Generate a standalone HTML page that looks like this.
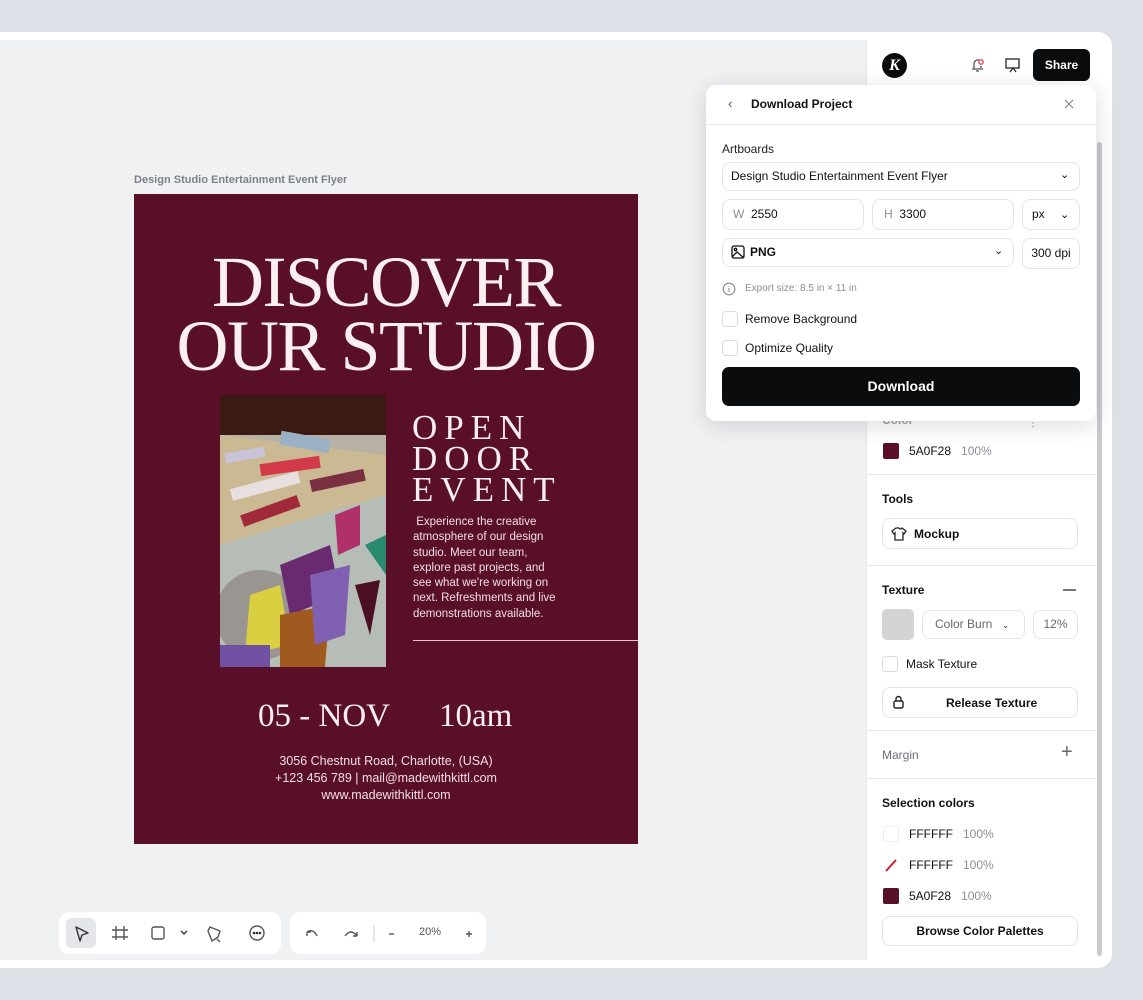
<!DOCTYPE html>
<html><head><meta charset="utf-8"><style>
*{box-sizing:border-box;margin:0;padding:0}
body{width:1143px;height:1000px;background:#dde1e7;font-family:"Liberation Sans",sans-serif;position:relative;overflow:hidden;color:#111}
.abs{position:absolute}
.card{left:-20px;top:32px;width:1132px;height:936px;background:#fff;border-radius:14px}
.canvas{left:0;top:40px;width:866px;height:920px;background:#f0f1f3}
.panel{left:866px;top:40px;width:238px;height:920px;background:#fff;border-left:1px solid #e6e7ea}
.flyer{left:134px;top:194px;width:504px;height:650px;background:#5a0f28}
.serif{font-family:"Liberation Serif",serif;color:#fff;font-weight:normal}
.sans{font-family:"Liberation Sans",sans-serif}
.box{border:1px solid #e3e5e8;border-radius:8px;background:#fff}
.lbl{font-size:12px;font-weight:bold;color:#111}
.sep{position:absolute;left:866px;width:230px;height:1px;background:#e6e7ea}
.sw{width:16px;height:16px;border-radius:2px}
.row{display:flex;align-items:center;font-size:12px;gap:10px}
.grey{color:#8a8f98}
.chk{width:16px;height:16px;border:1px solid #d9dbdf;border-radius:4px;background:#fff}
</style></head><body>
<div class="abs card"></div>
<div class="abs canvas"></div>

<div class="abs sans" style="left:134px;top:174px;font-size:11px;font-weight:bold;color:#7b818b">Design Studio Entertainment Event Flyer</div>
<div class="abs flyer">
  <div class="abs serif" style="left:0;width:504px;text-align:center;top:56px;font-size:72px;line-height:64px;letter-spacing:-1.5px;color:#fbeff2">DISCOVER<br>OUR STUDIO</div>
  <svg class="abs" style="left:86px;top:201px" width="166" height="272" viewBox="0 0 166 272">
    <rect width="166" height="272" fill="#b8b2a4"/>
    <rect width="166" height="40" fill="#3a1a12"/>
    <polygon points="0,40 166,60 166,120 0,150" fill="#cbb994"/>
    <polygon points="0,150 166,100 166,272 0,272" fill="#b6bcb6"/>
    <rect x="5" y="55" width="40" height="10" fill="#c9c4d8" transform="rotate(-10 25 60)"/>
    <rect x="40" y="65" width="60" height="12" fill="#d23a4a" transform="rotate(-8 70 70)"/>
    <rect x="10" y="85" width="70" height="12" fill="#e8e0e0" transform="rotate(-15 45 90)"/>
    <rect x="60" y="40" width="50" height="14" fill="#9bb0c4" transform="rotate(10 85 47)"/>
    <rect x="90" y="80" width="55" height="12" fill="#7a3040" transform="rotate(-12 115 85)"/>
    <rect x="20" y="110" width="60" height="12" fill="#a02a3a" transform="rotate(-20 50 115)"/>
    <circle cx="40" cy="220" r="45" fill="#9a9590"/>
    <polygon points="60,170 110,150 120,200 70,220" fill="#6a2a70"/>
    <polygon points="30,200 60,190 70,250 25,260" fill="#d8d040"/>
    <polygon points="60,220 110,210 105,272 60,272" fill="#a05a20"/>
    <polygon points="90,180 130,170 125,240 95,250" fill="#8060b0"/>
    <polygon points="135,190 160,185 150,240" fill="#4a0f22"/>
    <polygon points="145,150 166,140 166,180" fill="#2a8a70"/>
    <polygon points="115,120 140,110 140,150 118,160" fill="#b0306a"/>
    <rect x="0" y="250" width="50" height="22" fill="#7050a0"/>
  </svg>
  <div class="abs serif" style="left:278px;top:218px;font-size:35px;line-height:31px;letter-spacing:7px;color:#fbeff2">OPEN<br>DOOR<br>EVENT</div>
  <div class="abs sans" style="left:279px;top:321px;font-size:11.5px;line-height:15.3px;color:#f1dfe4">&nbsp;Experience the creative<br>atmosphere of our design<br>studio. Meet our team,<br>explore past projects, and<br>see what we're working on<br>next. Refreshments and live<br>demonstrations available.</div>
  <div class="abs" style="left:279px;top:446px;width:225px;height:1px;background:#e8c8d0"></div>
  <div class="abs serif" style="left:124px;top:504px;font-size:33px;letter-spacing:0px;color:#fbeff2">05 - NOV</div>
  <div class="abs serif" style="left:305px;top:504px;font-size:33px;color:#fbeff2">10am</div>
  <div class="abs sans" style="left:0;width:504px;text-align:center;top:559px;font-size:12.5px;line-height:17px;color:#f1dfe4">3056 Chestnut Road, Charlotte, (USA)<br>+123 456 789 | mail@madewithkittl.com<br>www.madewithkittl.com</div>
</div>

<!-- toolbar -->
<div class="abs" style="left:59px;top:912px;width:222px;height:42px;background:#fff;border-radius:10px"></div>
<div class="abs" style="left:66px;top:918px;width:30px;height:30px;background:#e4e6ea;border-radius:6px"></div>
<svg class="abs" style="left:59px;top:912px" width="222" height="42" fill="none" stroke="#333" stroke-width="1.4" stroke-linejoin="round">
  <path d="M17 15 L29 21 L23 23 L21 29 Z"/>
  <path d="M57 14v14M65 14v14M53 18h16M53 25h16" stroke="#555"/>
  <rect x="93" y="15" width="12" height="12" rx="2" stroke="#555"/>
  <path d="M122 19l3 3 3-3" stroke="#333"/>
  <path d="M151 15l10 4-2 6-6 4-4-10z M158 27l3 3" stroke="#555"/>
  <circle cx="198" cy="21" r="7" stroke="#555"/><circle cx="195" cy="21" r=".6" fill="#555"/><circle cx="198" cy="21" r=".6" fill="#555"/><circle cx="201" cy="21" r=".6" fill="#555"/>
</svg>
<div class="abs" style="left:290px;top:912px;width:196px;height:42px;background:#fff;border-radius:10px"></div>
<svg class="abs" style="left:290px;top:912px" width="196" height="42" fill="none" stroke="#555" stroke-width="1.4">
  <path d="M17 20 q6-4 10 4 M17 20 l0 4 M17 20 l4 0"/>
  <path d="M67 24 q-6-8-12 0 M67 24 l0-4 M67 24 l-4 0"/>
  <path d="M84 13v17" stroke="#ddd"/>
  <path d="M99 22h5"/>
  <path d="M176 22h6M179 19v6"/>
</svg>
<div class="abs" style="left:419px;top:926px;font-size:11px;color:#555">20%</div>

<!-- panel -->
<div class="abs panel"></div>
<div class="abs" style="left:882px;top:53px;width:25px;height:25px;border-radius:50%;background:#0b0b0b;color:#fff;font:italic bold 16px 'Liberation Serif',serif;text-align:center;line-height:25px">K</div>
<svg class="abs" style="left:968px;top:55px" width="20" height="20" fill="none" stroke="#555" stroke-width="1.3"><path d="M4 14h11M6 14V9a4 4 0 0 1 5-4M13 13V11M8 16h3"/><circle cx="13" cy="7" r="2.2" stroke="#e0424a"/></svg>
<svg class="abs" style="left:1003px;top:55px" width="20" height="20" fill="none" stroke="#333" stroke-width="1.4"><rect x="3" y="4" width="13" height="9"/><path d="M7 17l3-4 3 4"/></svg>
<div class="abs" style="left:1033px;top:49px;width:57px;height:32px;background:#0b0c0e;border-radius:6px;color:#fff;font-size:12px;font-weight:bold;text-align:center;line-height:32px">Share</div>

<div class="abs lbl" style="left:882px;top:413px;color:#444;opacity:.5">Color</div>
<div class="abs" style="left:1028px;top:418px;font-size:10px;color:#777">⋮</div>
<div class="abs row" style="left:883px;top:443px"><div class="sw" style="background:#5a0f28"></div><span>5A0F28</span><span class="grey">100%</span></div>
<div class="sep" style="top:474px"></div>
<div class="abs lbl" style="left:882px;top:492px">Tools</div>
<div class="abs box" style="left:882px;top:518px;width:196px;height:31px"></div>
<svg class="abs" style="left:891px;top:526px" width="16" height="16" fill="none" stroke="#222" stroke-width="1.3"><path d="M5 2L1 5l2 3 1-1v7h8V7l1 1 2-3-4-3q-2 2-3 0z"/></svg>
<div class="abs lbl" style="left:914px;top:527px">Mockup</div>
<div class="sep" style="top:565px"></div>
<div class="abs lbl" style="left:882px;top:583px">Texture</div>
<div class="abs" style="left:1063px;top:589px;width:13px;height:1.5px;background:#777"></div>
<div class="abs" style="left:882px;top:609px;width:32px;height:31px;border-radius:5px;background:#d4d4d4"></div>
<div class="abs box" style="left:922px;top:610px;width:103px;height:29px;font-size:12px;color:#666;line-height:27px;padding-left:12px">Color Burn <span style="font-size:9px;color:#333;margin-left:6px">⌄</span></div>
<div class="abs box" style="left:1033px;top:610px;width:45px;height:29px;font-size:12px;color:#666;line-height:27px;text-align:center">12%</div>
<div class="abs chk" style="left:882px;top:656px"></div>
<div class="abs" style="left:906px;top:657px;font-size:12px">Mask Texture</div>
<div class="abs box" style="left:882px;top:687px;width:196px;height:31px"></div>
<svg class="abs" style="left:892px;top:695px" width="14" height="14" fill="none" stroke="#222" stroke-width="1.4"><rect x="2" y="6" width="9" height="7" rx="1.5"/><path d="M4 6V4a2.5 2.5 0 0 1 5 0v2"/></svg>
<div class="abs lbl" style="left:946px;top:696px">Release Texture</div>
<div class="sep" style="top:730px"></div>
<div class="abs" style="left:882px;top:748px;font-size:12px;color:#6c717a">Margin</div>
<div class="abs" style="left:1061px;top:741px;font-size:20px;color:#666;font-weight:300">+</div>
<div class="sep" style="top:778px"></div>
<div class="abs lbl" style="left:882px;top:796px">Selection colors</div>
<div class="abs row" style="left:883px;top:826px"><div class="sw" style="background:#fff;border:1px solid #eee"></div><span>FFFFFF</span><span class="grey">100%</span></div>
<div class="abs row" style="left:883px;top:857px"><svg class="sw" width="16" height="16"><path d="M3 14L13 3" stroke="#d02030" stroke-width="2"/></svg><span>FFFFFF</span><span class="grey">100%</span></div>
<div class="abs row" style="left:883px;top:888px"><div class="sw" style="background:#5a0f28"></div><span>5A0F28</span><span class="grey">100%</span></div>
<div class="abs box" style="left:882px;top:916px;width:196px;height:30px;text-align:center;line-height:28px" ><span class="lbl">Browse Color Palettes</span></div>
<div class="abs" style="left:1097px;top:142px;width:5px;height:814px;background:#c9cbcf;border-radius:3px"></div>

<!-- popup -->
<div class="abs" style="left:706px;top:85px;width:390px;height:336px;background:#fff;border-radius:10px;box-shadow:0 4px 24px rgba(0,0,0,.14)"></div>
<div class="abs" style="left:728px;top:96px;font-size:13px;color:#555">‹</div>
<div class="abs lbl" style="left:751px;top:97px">Download Project</div>
<svg class="abs" style="left:1063px;top:98px" width="12" height="12" stroke="#888" stroke-width="1.2"><path d="M2 2l8 8M10 2l-8 8"/></svg>
<div class="abs" style="left:706px;top:124px;width:390px;height:1px;background:#e8e9ec"></div>
<div class="abs" style="left:722px;top:142px;font-size:12px;color:#222">Artboards</div>
<div class="abs box" style="left:722px;top:162px;width:358px;height:29px;font-size:12px;line-height:27px;padding-left:8px;color:#111">Design Studio Entertainment Event Flyer</div>
<div class="abs" style="left:1060px;top:168px;font-size:11px">⌄</div>
<div class="abs box" style="left:722px;top:199px;width:142px;height:31px;font-size:12px;line-height:29px;padding-left:10px"><span class="grey">W</span>&nbsp; 2550</div>
<div class="abs box" style="left:872px;top:199px;width:142px;height:31px;font-size:12px;line-height:29px;padding-left:11px"><span class="grey">H</span>&nbsp; 3300</div>
<div class="abs box" style="left:1022px;top:199px;width:58px;height:31px;font-size:12px;line-height:29px;padding-left:9px">px <span style="margin-left:12px;font-size:11px">⌄</span></div>
<div class="abs box" style="left:722px;top:238px;width:292px;height:29px"></div>
<svg class="abs" style="left:731px;top:245px" width="14" height="14" fill="none" stroke="#111" stroke-width="1.3"><rect x="1" y="1" width="12" height="12" rx="2"/><circle cx="4.5" cy="4.5" r="1.2"/><path d="M1 12l5-5 7 6"/></svg>
<div class="abs" style="left:750px;top:245px;font-size:12px;font-weight:600">PNG</div>
<div class="abs" style="left:994px;top:244px;font-size:11px">⌄</div>
<div class="abs box" style="left:1022px;top:238px;width:58px;height:31px;font-size:12px;line-height:29px;text-align:center">300 dpi</div>
<svg class="abs" style="left:722px;top:282px" width="14" height="14" fill="none" stroke="#888" stroke-width="1.1"><circle cx="7" cy="7" r="5.8"/><path d="M7 6v4M7 4v.5"/></svg>
<div class="abs" style="left:745px;top:283px;font-size:10px;color:#8a8f98">Export size: 8.5 in × 11 in</div>
<div class="abs chk" style="left:722px;top:311px"></div>
<div class="abs" style="left:745px;top:312px;font-size:12px">Remove Background</div>
<div class="abs chk" style="left:722px;top:340px"></div>
<div class="abs" style="left:745px;top:341px;font-size:12px">Optimize Quality</div>
<div class="abs" style="left:722px;top:367px;width:358px;height:39px;background:#0b0c0e;border-radius:7px;color:#fff;font-size:14px;font-weight:bold;text-align:center;line-height:39px">Download</div>
</body></html>
